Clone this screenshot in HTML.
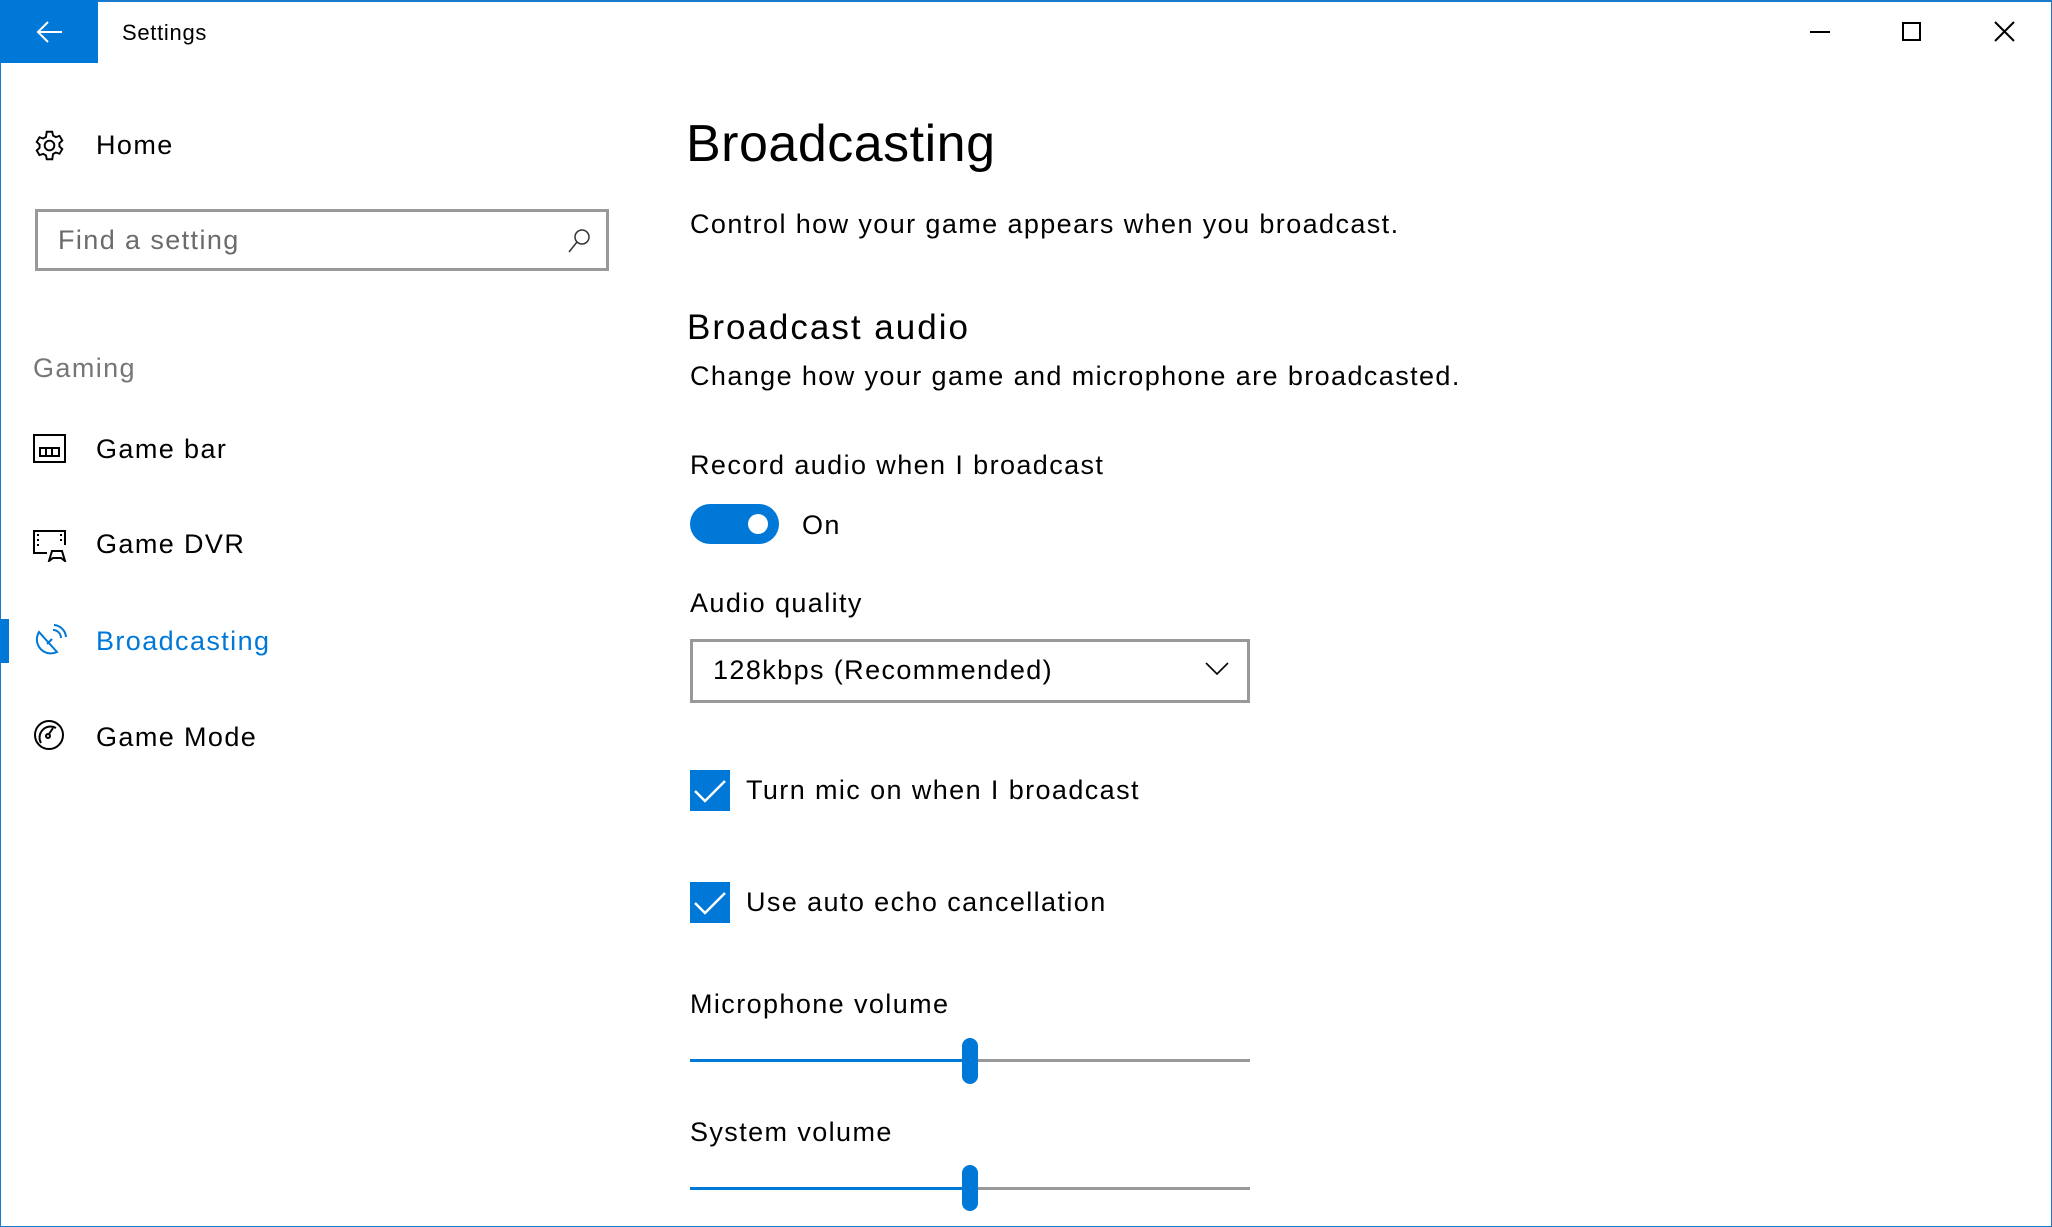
<!DOCTYPE html>
<html><head><meta charset="utf-8"><style>
*{margin:0;padding:0;box-sizing:border-box}
body{width:2052px;height:1227px;overflow:hidden;background:#fff;font-family:"Segoe UI","Liberation Sans",sans-serif;color:#000;position:relative}
.a{position:absolute;white-space:nowrap}
.win{position:absolute;left:0;top:0;width:2052px;height:1227px;border:1px solid #1979ca;border-top:2px solid #1979ca}
.t26{font-size:27px;line-height:36px;letter-spacing:1.4px}
.trk{position:absolute;height:3px;background:#999}
.fill{position:absolute;height:3px;background:#0078d7}
.thumb{position:absolute;width:16px;height:46px;border-radius:8px;background:#0078d7}
.cb{position:absolute;width:40px;height:41px;background:#0078d7}
</style></head><body>
<div class="win"></div>
<div class="a" style="left:0;top:0;width:98px;height:63px;background:#0078d7"></div>
<svg class="a" style="left:36px;top:20px" width="28" height="24" viewBox="0 0 28 24"><path d="M26 12H3M12 2L2 12l10 10" stroke="#fff" stroke-width="2" fill="none"/></svg>
<div class="a" style="left:122px;top:19px;font-size:22px;line-height:28px;letter-spacing:0.7px">Settings</div>
<div class="a" style="left:1810px;top:31px;width:20px;height:2px;background:#000"></div>
<div class="a" style="left:1902px;top:22px;width:19px;height:19px;border:2px solid #000"></div>
<svg class="a" style="left:1994px;top:21px" width="21" height="21"><path d="M1 1L20 20M20 1L1 20" stroke="#000" stroke-width="2"/></svg>

<svg class="a" style="left:33px;top:129px" width="33" height="33" viewBox="0 0 24 24" fill="none" stroke="#000" stroke-width="1.4"><circle cx="12" cy="12" r="3.5"/><path d="M10 2h4l.6 2.8 2 1.1 2.7-.9 2 3.4-2.1 1.9v2.4l2.1 1.9-2 3.4-2.7-.9-2 1.1L14 22h-4l-.6-2.8-2-1.1-2.7.9-2-3.4 2.1-1.9v-2.4L2.7 9.4l2-3.4 2.7.9 2-1.1z"/></svg>
<div class="a t26" style="left:96px;top:127px">Home</div>
<div class="a" style="left:35px;top:209px;width:574px;height:62px;border:3px solid #999"></div>
<div class="a t26" style="left:58px;top:222px;color:#6b6b6b">Find a setting</div>
<svg class="a" style="left:566px;top:227px" width="26" height="28"><circle cx="16" cy="10" r="7" stroke="#333" stroke-width="1.5" fill="none"/><path d="M11 15L3 25" stroke="#333" stroke-width="1.5"/></svg>
<div class="a t26" style="left:33px;top:350px;color:#767676">Gaming</div>

<svg class="a" style="left:33px;top:434px" width="33" height="30"><rect x="1" y="1" width="31" height="27" fill="none" stroke="#000" stroke-width="2"/><rect x="7" y="14" width="19" height="8" fill="none" stroke="#000" stroke-width="2"/><path d="M13 15v6M19 15v6" stroke="#000" stroke-width="2"/></svg>
<div class="a t26" style="left:96px;top:431px">Game bar</div>
<svg class="a" style="left:33px;top:530px" width="34" height="32" viewBox="0 0 34 32" fill="none" stroke="#000" stroke-width="2"><path d="M14 23H1V1h31v14"/><path d="M5 4v2M5 9v2M5 14v2M28 4v2M28 9v2"/><path d="M16 31l3-10h10l3 10-4-3h-8z"/></svg>
<div class="a t26" style="left:96px;top:526px">Game DVR</div>
<div class="a" style="left:0;top:619px;width:9px;height:44px;background:#0078d7"></div>
<svg class="a" style="left:33px;top:624px" width="34" height="34" viewBox="0 0 34 34" fill="none" stroke="#0078d7" stroke-width="2"><path d="M6 8a14 14 0 0 0 18 20z"/><path d="M14 20l5-5"/><path d="M20 6a8 8 0 0 1 8 8M21 1a13 13 0 0 1 12 12"/></svg>
<div class="a t26" style="left:96px;top:623px;color:#0078d7">Broadcasting</div>
<svg class="a" style="left:33px;top:719px" width="32" height="32" fill="none" stroke="#000" stroke-width="2"><circle cx="16" cy="16" r="14"/><path d="M8 24a11 11 0 0 1 15-15"/><circle cx="15" cy="17" r="2"/><path d="M16 15l4-6"/></svg>
<div class="a t26" style="left:96px;top:719px">Game Mode</div>

<div class="a" style="left:686px;top:112px;font-size:52px;line-height:64px;letter-spacing:0.5px">Broadcasting</div>
<div class="a t26" style="left:690px;top:206px">Control how your game appears when you broadcast.</div>
<div class="a" style="left:687px;top:306px;font-size:35px;line-height:44px;letter-spacing:2px">Broadcast audio</div>
<div class="a t26" style="left:690px;top:358px">Change how your game and microphone are broadcasted.</div>
<div class="a t26" style="left:690px;top:447px">Record audio when I broadcast</div>
<div class="a" style="left:690px;top:504px;width:89px;height:40px;border-radius:20px;background:#0078d7"></div>
<div class="a" style="left:748px;top:514px;width:20px;height:20px;border-radius:10px;background:#fff"></div>
<div class="a t26" style="left:802px;top:507px">On</div>
<div class="a t26" style="left:690px;top:585px">Audio quality</div>
<div class="a" style="left:690px;top:639px;width:560px;height:64px;border:3px solid #999"></div>
<div class="a t26" style="left:713px;top:652px">128kbps (Recommended)</div>
<svg class="a" style="left:1205px;top:662px" width="24" height="14"><path d="M1 1l11 11L23 1" stroke="#000" stroke-width="1.6" fill="none"/></svg>
<div class="cb" style="left:690px;top:770px"></div>
<svg class="a" style="left:690px;top:770px" width="40" height="41"><path d="M5 21l10 10L35 11" stroke="#fff" stroke-width="2.5" fill="none"/></svg>
<div class="a t26" style="left:746px;top:772px">Turn mic on when I broadcast</div>
<div class="cb" style="left:690px;top:882px"></div>
<svg class="a" style="left:690px;top:882px" width="40" height="41"><path d="M5 21l10 10L35 11" stroke="#fff" stroke-width="2.5" fill="none"/></svg>
<div class="a t26" style="left:746px;top:884px">Use auto echo cancellation</div>
<div class="a t26" style="left:690px;top:986px">Microphone volume</div>
<div class="trk" style="left:690px;top:1059px;width:560px"></div>
<div class="fill" style="left:690px;top:1059px;width:280px"></div>
<div class="thumb" style="left:962px;top:1038px"></div>
<div class="a t26" style="left:690px;top:1114px">System volume</div>
<div class="trk" style="left:690px;top:1187px;width:560px"></div>
<div class="fill" style="left:690px;top:1187px;width:280px"></div>
<div class="thumb" style="left:962px;top:1165px"></div>
</body></html>
